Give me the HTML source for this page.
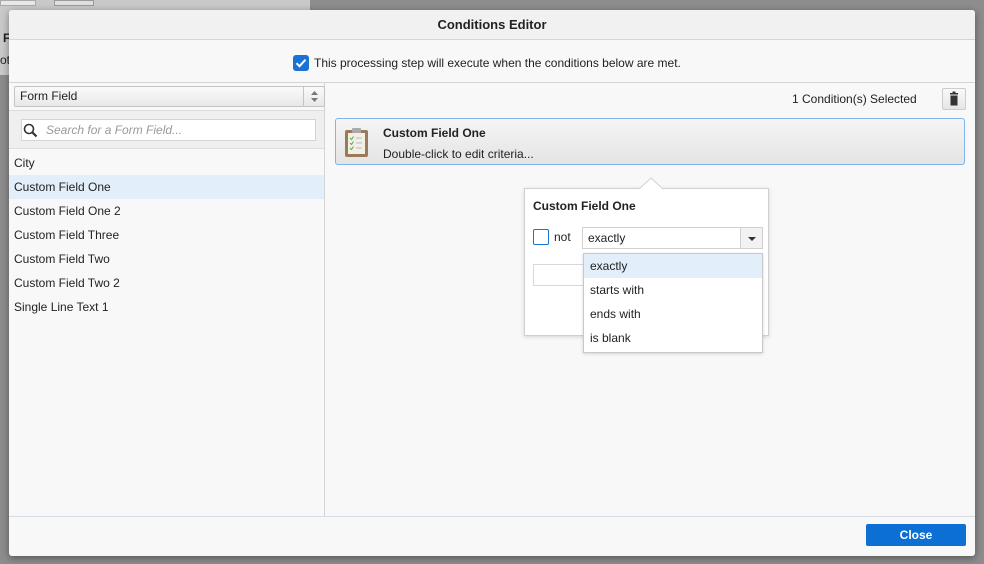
<!DOCTYPE html>
<html><head><meta charset="utf-8"><style>
*{box-sizing:border-box;margin:0;padding:0}
body{width:984px;height:564px;overflow:hidden;background:#8d8d8d;font-family:"Liberation Sans",Arial,sans-serif;font-size:12px;color:#222;position:relative}
.abs{position:absolute}
.dlg{left:9px;top:10px;width:966px;height:546px;background:#f8f8f8;border-radius:3px;box-shadow:0 2px 8px rgba(0,0,0,.4);overflow:hidden}
.item{position:absolute;left:0;width:315px;height:24px;line-height:24px;padding-left:5px;font-size:12px}
.opt{position:absolute;left:0;width:178px;height:24px;line-height:24px;padding-left:6px;font-size:12px}
</style></head><body>
<!-- background page bits -->
<div class="abs" style="left:0;top:0;width:310px;height:75px;background:#c9c9c9"></div>
<div class="abs" style="left:0;top:0;width:36px;height:6px;background:#e8e8e8;border:1px solid #aaa"></div>
<div class="abs" style="left:54px;top:0;width:40px;height:6px;background:#e0e0e0;border:1px solid #999"></div>
<div class="abs" style="left:3px;top:31px;font-weight:bold;font-size:12px">F</div>
<div class="abs" style="left:0;top:53px;font-size:12px">oti</div>

<div class="abs dlg">
  <div class="abs" style="left:0;top:0;width:966px;height:30px;background:#f1f1f1;border-bottom:1px solid #cfd6de;text-align:center;line-height:30px;font-weight:bold;font-size:13px">Conditions Editor</div>
  <div class="abs" style="left:284px;top:45px;width:16px;height:16px;background:#1a72d6;border-radius:3px">
    <svg width="16" height="16" viewBox="0 0 16 16"><path d="M3.5 8.2l3 3 6-6.5" stroke="#fff" stroke-width="2" fill="none"/></svg>
  </div>
  <div class="abs" style="left:305px;top:45px;font-size:12px;line-height:16px">This processing step will execute when the conditions below are met.</div>
  <div class="abs" style="left:0;top:72px;width:966px;height:1px;background:#d4d4d4"></div>
  <!-- left panel -->
  <div class="abs" style="left:0;top:73px;width:316px;height:433px;background:#f8f8f8;border-right:1px solid #d4d4d4"></div>
  <div class="abs" style="left:5px;top:76px;width:311px;height:21px;border:1px solid #c4c4c4;border-radius:2px;background:linear-gradient(#fafafa,#e8e8e8);line-height:19px;padding-left:5px;font-size:12px">Form Field
    <div class="abs" style="right:0;top:0;width:21px;height:19px;border-left:1px solid #c4c4c4">
      <svg width="21" height="19"><path d="M7 8l3.5-4 3.5 4z M7 11l3.5 4 3.5-4z" fill="#777"/></svg></div>
  </div>
  <div class="abs" style="left:0;top:100px;width:315px;height:39px;background:#efefef;border-top:1px solid #ddd;border-bottom:1px solid #ddd"></div>
  <div class="abs" style="left:12px;top:109px;width:295px;height:22px;background:#fff;border:1px solid #d4d4d4"></div>
  <svg class="abs" style="left:13px;top:112px" width="18" height="18"><circle cx="7" cy="7" r="4.5" stroke="#333" stroke-width="1.6" fill="none"/><path d="M10 10l4.5 4.5" stroke="#333" stroke-width="2.2"/></svg>
  <div class="abs" style="left:37px;top:113px;color:#999;font-style:italic;font-size:12px">Search for a Form Field...</div>
  <div class="item" style="top:141px">City</div>
  <div class="item" style="top:165px;background:#e2eefa">Custom Field One</div>
  <div class="item" style="top:189px">Custom Field One 2</div>
  <div class="item" style="top:213px">Custom Field Three</div>
  <div class="item" style="top:237px">Custom Field Two</div>
  <div class="item" style="top:261px">Custom Field Two 2</div>
  <div class="item" style="top:285px">Single Line Text 1</div>
  <!-- right -->
  <div class="abs" style="left:783px;top:82px;font-size:12px">1 Condition(s) Selected</div>
  <div class="abs" style="left:933px;top:78px;width:24px;height:22px;border:1px solid #ccc;border-radius:2px;background:linear-gradient(#fafafa,#e6e6e6)">
    <svg width="22" height="20"><rect x="7" y="4" width="8" height="1.5" fill="#333"/><rect x="9.5" y="2.5" width="3" height="2" fill="#333"/><rect x="7.5" y="6.5" width="7" height="10" fill="#333"/></svg></div>
  <div class="abs" style="left:326px;top:108px;width:630px;height:47px;border:1px solid #7fb4ec;border-radius:3px;background:linear-gradient(#f5f5f5,#e4e4e4)"></div>
  <svg class="abs" style="left:335px;top:116px" width="26" height="32"><rect x="1" y="4" width="23" height="27" rx="2" fill="#9b7a58"/><rect x="4" y="7" width="17" height="21" fill="#f2efe6"/><rect x="8" y="2" width="9" height="5" rx="1" fill="#aaa"/><path d="M6 12l1.5 1.5 2-3M6 17l1.5 1.5 2-3M6 22l1.5 1.5 2-3" stroke="#5a5" fill="none"/><path d="M12 12h6M12 17h6M12 22h6" stroke="#bbb"/></svg>
  <div class="abs" style="left:374px;top:116px;font-weight:bold;font-size:12px">Custom Field One</div>
  <div class="abs" style="left:374px;top:137px;font-size:12px">Double-click to edit criteria...</div>
  <!-- popover -->
  <div class="abs" style="left:515px;top:178px;width:245px;height:148px;background:#fff;border:1px solid #d0d0d0;box-shadow:0 1px 4px rgba(0,0,0,.15)"></div>
  <svg class="abs" style="left:630px;top:167px" width="24" height="13"><path d="M0 12L12 1L24 12" fill="#fff" stroke="#d0d0d0"/></svg>
  <div class="abs" style="left:524px;top:189px;font-weight:bold;font-size:12px">Custom Field One</div>
  <div class="abs" style="left:524px;top:219px;width:16px;height:16px;border:1px solid #1a72d6;border-radius:2px;background:#fff"></div>
  <div class="abs" style="left:545px;top:220px;font-size:12px">not</div>
  <div class="abs" style="left:573px;top:217px;width:181px;height:22px;border:1px solid #d0d0d0;background:#fff;line-height:20px;padding-left:5px">exactly
    <div class="abs" style="right:0;top:0;width:22px;height:20px;border-left:1px solid #d0d0d0;background:#f2f2f2"><svg width="22" height="20"><path d="M7 9h8l-4 4z" fill="#333"/></svg></div></div>
  <div class="abs" style="left:524px;top:254px;width:60px;height:22px;border:1px solid #d8d8d8"></div>
  <div class="abs" style="left:574px;top:243px;width:180px;height:100px;background:#fff;border:1px solid #c8c8c8;box-shadow:0 1px 3px rgba(0,0,0,.15)">
    <div class="opt" style="top:0;background:#e2eefa">exactly</div>
    <div class="opt" style="top:24px">starts with</div>
    <div class="opt" style="top:48px">ends with</div>
    <div class="opt" style="top:72px">is blank</div>
  </div>
  <!-- footer -->
  <div class="abs" style="left:0;top:506px;width:966px;height:1px;background:#d4dde6"></div>
  <div class="abs" style="left:857px;top:514px;width:100px;height:22px;background:#0b6fd4;border-radius:2px;color:#fff;font-weight:bold;text-align:center;line-height:22px;font-size:12px">Close</div>
</div>
</body></html>
